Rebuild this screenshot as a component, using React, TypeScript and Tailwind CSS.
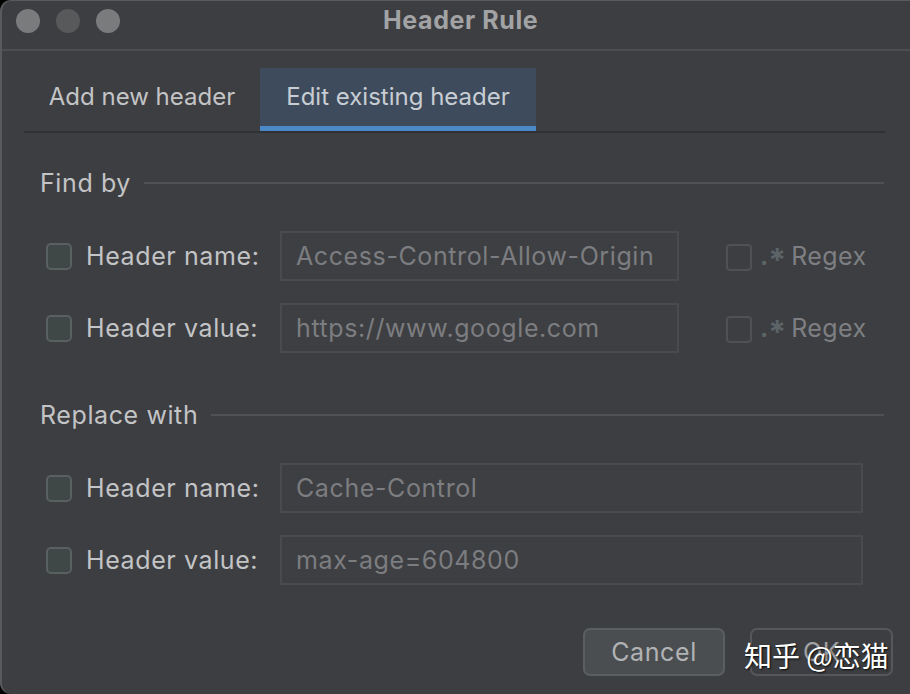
import React from "react";

function Check({ filled }: { filled: boolean }) {
  return filled ? (
    <div className="w-[26px] h-[27px] shrink-0 rounded-[5px] bg-[#404747] border-2 border-[#596060]" />
  ) : (
    <div className="w-[26px] h-[27px] shrink-0 rounded-[4px] border-2 border-[#4f5154]" />
  );
}

function Field({ text, wide }: { text: string; wide?: boolean }) {
  return (
    <div
      className={
        (wide ? "w-[583px]" : "w-[399px]") +
        " h-[50px] shrink-0 border-2 border-[#4a4b4f] bg-[#3e3f42] flex items-center pl-[14px] pt-[2px] text-[#7c7d80] whitespace-nowrap overflow-hidden"
      }
    >
      {text}
    </div>
  );
}

function Row({ label, value, regex }: { label: string; value: string; regex?: boolean }) {
  return (
    <div className="flex items-center h-[50px] pl-[6px]">
      <Check filled />
      <div className="w-[208px] shrink-0 pl-[14px] pt-[2px] text-[#c3c4c6] whitespace-nowrap">{label}</div>
      <Field text={value} wide={!regex} />
      {regex && (
        <div className="flex items-center ml-[47px] pt-[2px]">
          <Check filled={false} />
          <span className="ml-[8px] text-[#5c6467] font-bold tracking-normal">.</span>
          <span className="text-[#5c6467] font-bold text-[32px] leading-none relative top-[4px] tracking-normal">*</span>
          <span className="ml-[5px] text-[#7e7f82] tracking-[0.4px]">Regex</span>
        </div>
      )}
    </div>
  );
}

function Section({ title }: { title: string }) {
  return (
    <div className="flex items-center h-[28px] gap-[13px]">
      <span className="text-[#c3c4c6] whitespace-nowrap pt-[2px]">{title}</span>
      <div className="flex-1 h-[2px] bg-[#505154]" />
    </div>
  );
}

export default function App() {
  return (
    <div className="relative w-[910px] h-[694px] bg-black overflow-hidden font-['Inter',sans-serif] text-[25px] tracking-[0.6px]">
      <div className="h-full bg-[#3d3e41] rounded-l-[11px] border-l-2 border-t border-[#595a5d] flex flex-col">
        {/* title bar */}
        <div className="h-[50px] shrink-0 border-b-2 border-[#4d4e51] pl-[14px] pt-[8px]">
          <div className="flex items-center h-[24px]">
            <div className="flex gap-[16px]">
              <div className="w-[24px] h-[24px] rounded-full bg-[#7a7b7d]" />
              <div className="w-[24px] h-[24px] rounded-full bg-[#58595b]" />
              <div className="w-[24px] h-[24px] rounded-full bg-[#7a7b7d]" />
            </div>
            <div className="ml-[263px] font-bold text-[#a2a3a5]">Header Rule</div>
          </div>
        </div>

        {/* tabs */}
        <div className="pl-[22px] pr-[25px] pt-[17px] text-[24px] tracking-normal">
          <div className="flex border-b-2 border-[#303134]">
            <div className="w-[236px] h-[63px] flex items-center justify-center text-[#c3c4c6] pb-[5px]">
              Add new header
            </div>
            <div className="w-[276px] h-[63px] flex items-center justify-center bg-[#3e4b5c] border-b-[5px] border-[#4b89c9] text-[#c8cdd4] -mb-[2px]">
              Edit existing header
            </div>
          </div>
        </div>

        {/* content */}
        <div className="pl-[38px] pr-[26px] pt-[36px] flex flex-col">
          <Section title="Find by" />
          <div className="mt-[34px] flex flex-col gap-[22px]">
            <Row label="Header name:" value="Access-Control-Allow-Origin" regex />
            <Row label="Header value:" value="https://www.google.com" regex />
          </div>
          <div className="mt-[48px]">
            <Section title="Replace with" />
          </div>
          <div className="mt-[34px] flex flex-col gap-[22px]">
            <Row label="Header name:" value="Cache-Control" />
            <Row label="Header value:" value="max-age=604800" />
          </div>
        </div>

        {/* buttons */}
        <div className="mt-[43px] flex justify-end pr-[17px] gap-[25px]">
          <div className="w-[142px] h-[48px] rounded-[7px] bg-[#4b4e51] border-2 border-[#5b5e61] flex items-center justify-center pt-[2px] text-[#b1b3b5]">
            Cancel
          </div>
          <div className="w-[143px] h-[48px] rounded-[7px] border-2 border-[#55575a] flex items-center justify-center pt-[2px] text-[#9fa1a3]">
            OK
          </div>
        </div>
      </div>

      {/* watermark */}
      <div className="absolute left-[744px] top-[636px] font-['Noto_Sans_CJK_SC',sans-serif] text-[28px] leading-[38px] tracking-normal text-white whitespace-nowrap [text-shadow:1px_1px_2px_rgba(0,0,0,0.9)]">
        知乎 @恋猫
      </div>
    </div>
  );
}
